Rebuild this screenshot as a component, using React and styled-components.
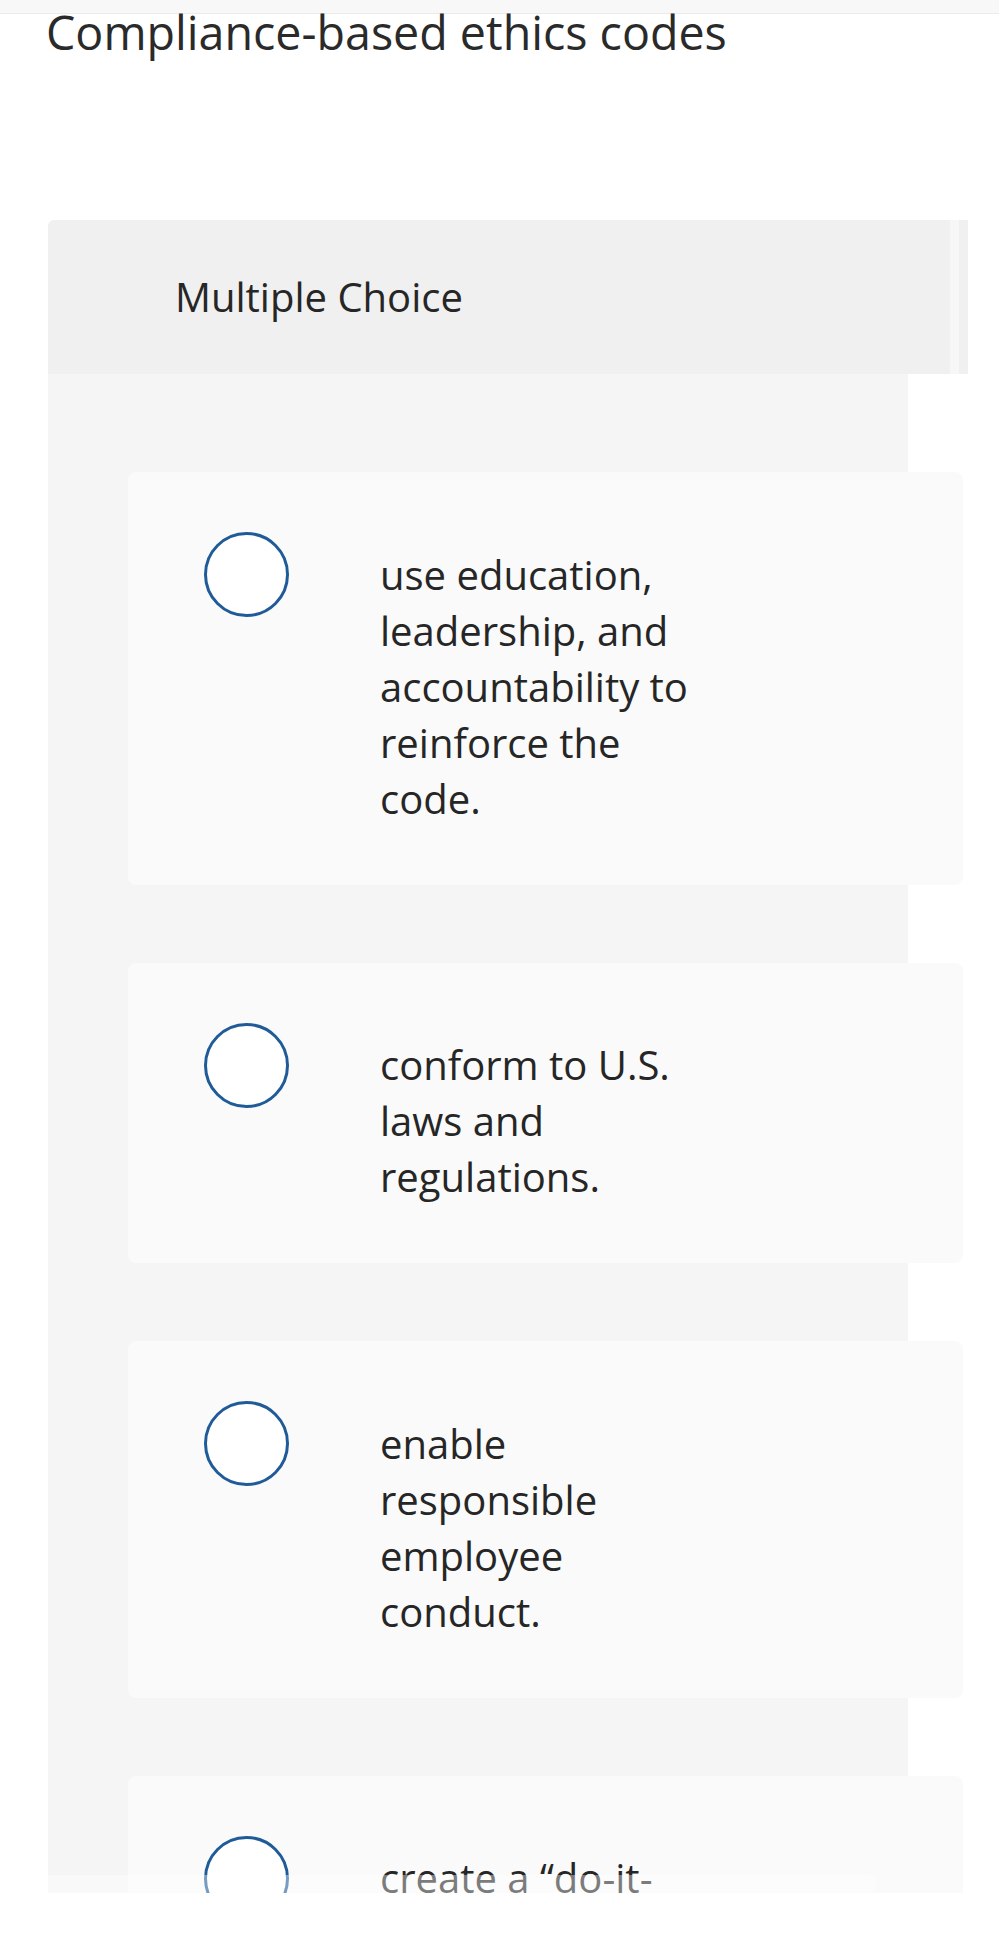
import React from "react";
import styled, { createGlobalStyle } from "styled-components";

const GlobalStyle = createGlobalStyle`
  html, body {
    margin: 0;
    padding: 0;
    background: #ffffff;
  }
  body {
    font-family: "Open Sans", "Liberation Sans", sans-serif;
    color: #262626;
  }
  * {
    box-sizing: border-box;
  }
`;

const Viewport = styled.div`
  position: relative;
  width: 999px;
  height: 1893px;
  overflow: hidden;
  background: #ffffff;
`;

const TopBar = styled.div`
  height: 14px;
  background: #f8f8f8;
  border-bottom: 1px solid #ebebeb;
`;

const Title = styled.h1`
  margin: -14px 0 156px 46px;
  font-size: 46.6px;
  line-height: 64px;
  font-weight: 400;
  color: #2a2a2a;
  white-space: nowrap;
`;

const Question = styled.section`
  margin-left: 48px;
  width: 920px;
`;

const Header = styled.div`
  height: 154px;
  display: flex;
  align-items: center;
  padding-left: 127px;
  border-radius: 6px 0 0 0;
  background: linear-gradient(
    to right,
    #f0f0f0 0,
    #f0f0f0 902px,
    #f7f7f7 902px,
    #f7f7f7 911px,
    #f0f0f0 911px
  );
  font-size: 40px;
  line-height: 56px;
  color: #262626;
`;

const Body = styled.div`
  width: 860px;
  background: #f5f5f5;
  padding: 98px 0 0 80px;
  display: flex;
  flex-direction: column;
  gap: 78px;
`;

const Option = styled.div`
  width: 835px;
  display: flex;
  align-items: flex-start;
  gap: 91px;
  padding: 60px 0 58px 76px;
  background: #fafafa;
  border-radius: 8px;
`;

const Radio = styled.span`
  flex: none;
  display: block;
  width: 85px;
  height: 85px;
  border-radius: 50%;
  border: 3px solid #1f5b98;
  background: #ffffff;
`;

const OptionText = styled.span`
  display: block;
  margin-top: 14.5px;
  max-width: 330px;
  font-size: 40px;
  line-height: 56px;
  color: #262626;
`;

const Fade = styled.div`
  position: absolute;
  left: 48px;
  top: 1875px;
  width: 829px;
  height: 18px;
  border-radius: 0 9px 9px 0;
  background: rgba(255, 255, 255, 0.4);
  pointer-events: none;
`;

const options = [
  "use education, leadership, and accountability to reinforce the code.",
  "conform to U.S. laws and regulations.",
  "enable responsible employee conduct.",
  "create a \u201cdo-it-yourself\u201d approach to ethics.",
];

export default function App() {
  return (
    <>
      <GlobalStyle />
      <Viewport>
        <TopBar />
        <Title>Compliance-based ethics codes</Title>
        <Question>
          <Header>Multiple Choice</Header>
          <Body role="radiogroup">
            {options.map((text) => (
              <Option key={text} role="radio" aria-checked="false">
                <Radio />
                <OptionText>{text}</OptionText>
              </Option>
            ))}
          </Body>
        </Question>
        <Fade />
      </Viewport>
    </>
  );
}
